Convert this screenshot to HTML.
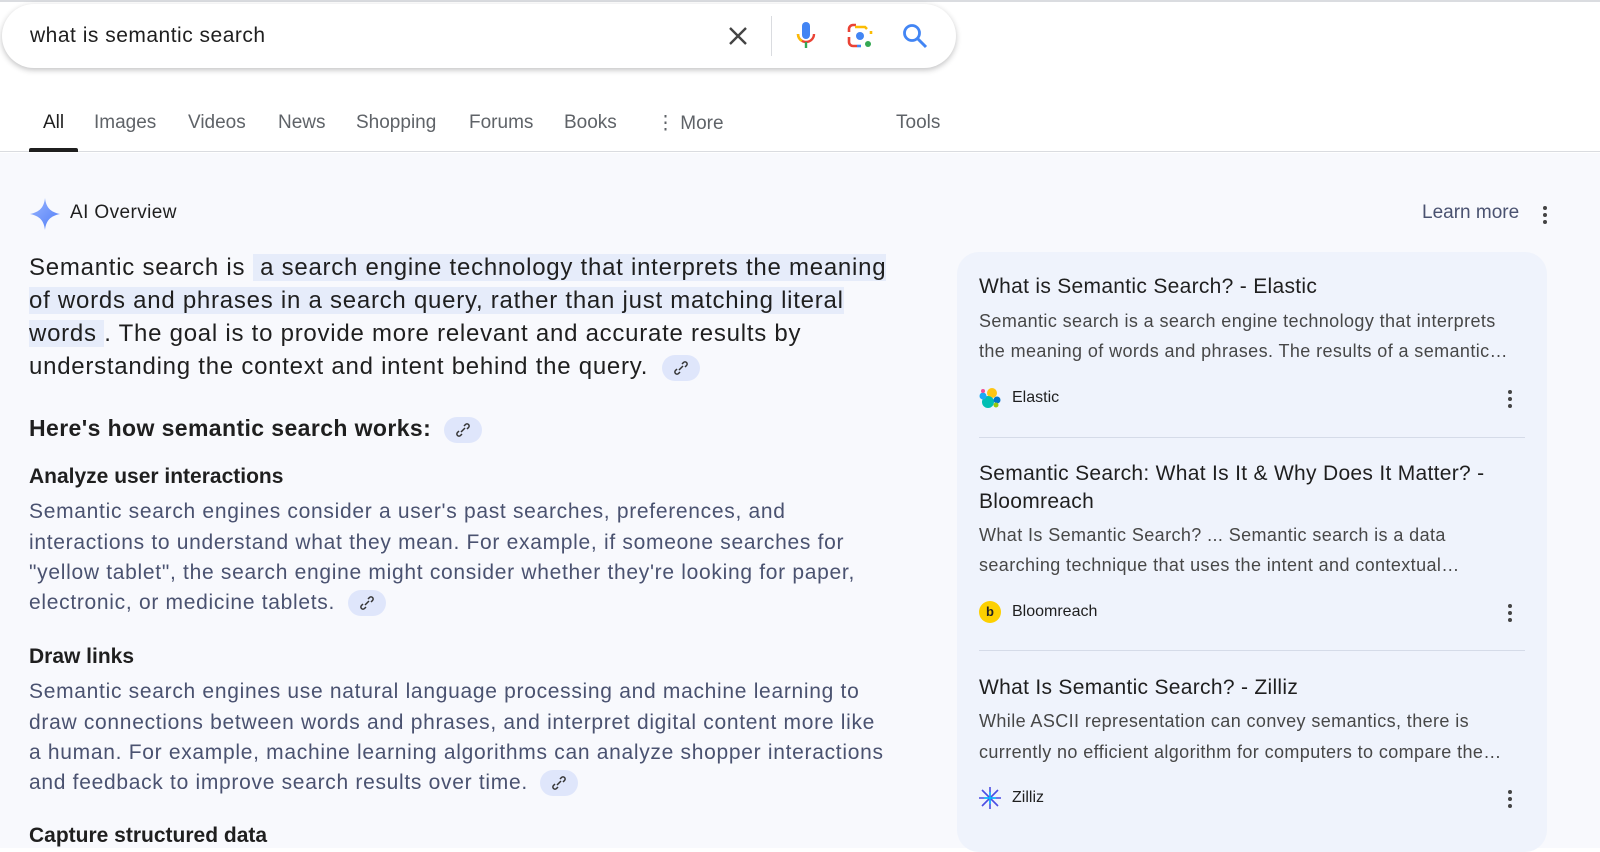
<!DOCTYPE html>
<html><head><meta charset="utf-8"><style>
*{margin:0;padding:0;box-sizing:border-box}
body{width:1600px;height:848px;overflow:hidden;background:#fff;font-family:"Liberation Sans",Arial,sans-serif;position:relative}
.a{position:absolute;white-space:nowrap}
.top{position:absolute;left:0;top:0;width:1600px;height:152px;background:#fff;border-bottom:1px solid #dadce0}
.bg{position:absolute;left:0;top:153px;width:1600px;height:695px;background:#f8f9fd}
.sb{position:absolute;left:2px;top:4px;width:954px;height:64px;border-radius:32px;background:#fff;box-shadow:0 2px 6px rgba(32,33,36,.28)}
.tab{position:absolute;top:112px;font-size:19px;color:#5f6368}
.main{font-size:24px;color:#1f1f1f;line-height:33px;letter-spacing:0.75px}
.hl{background:#e6ecfa}
.body{font-size:21px;color:#4a5270;line-height:30px;letter-spacing:0.7px}
.h{font-size:21px;color:#1f1f1f;font-weight:bold}
.chip{display:inline-block;width:38px;height:26px;border-radius:13px;background:#dfe6fb;vertical-align:middle;position:relative;margin-left:6px}
.chip svg{position:absolute;left:12px;top:6px}
.card{position:absolute;left:957px;top:252px;width:590px;height:600px;border-radius:22px;background:#eff3fc}
.ct{font-size:21px;color:#1f1f1f;letter-spacing:0.3px}
.cs{font-size:18px;color:#474747;line-height:30px;letter-spacing:0.4px}
.src{font-size:16px;color:#1f1f1f}
.dots{position:absolute;width:4px}
.dots i{display:block;width:4px;height:4px;border-radius:2px;background:#444;margin-bottom:3px}
.sep{position:absolute;left:979px;width:546px;height:1px;background:#d5dbe8}
</style></head><body>
<div class="top"></div>
<div class="bg"></div>
<div class="a" style="left:0;top:0;width:1600px;height:2px;background:#dadce0"></div>
<div class="sb"></div>
<div class="a" style="left:30px;top:24px;font-size:21px;letter-spacing:0.5px;color:#1f1f1f">what is semantic search</div>
<svg class="a" style="left:727px;top:25px" width="22" height="22" viewBox="0 0 22 22"><path d="M3 3L19 19M19 3L3 19" stroke="#444" stroke-width="2.4"/></svg>
<div class="a" style="left:771px;top:16px;width:1px;height:40px;background:#dadce0"></div>
<svg class="a" style="left:794px;top:20px" width="24" height="32" viewBox="0 0 24 32"><rect x="8" y="2" width="8" height="17" rx="4" fill="#4285f4"/><path d="M4 14a8 8 0 0 0 16 0" stroke="#ea4335" stroke-width="2.4" fill="none"/><path d="M12 22v6" stroke="#34a853" stroke-width="2.4"/><path d="M4 14a8 8 0 0 0 4 7" stroke="#fbbc04" stroke-width="2.4" fill="none"/></svg>
<svg class="a" style="left:846px;top:22px" width="28" height="28" viewBox="0 0 28 28"><path d="M3 10V7a4 4 0 0 1 4-4h3" stroke="#ea4335" stroke-width="2.6" fill="none"/><path d="M9 5h10l2 2" stroke="#fbbc04" stroke-width="2.6" fill="none"/><path d="M25 9v3" stroke="#fbbc04" stroke-width="2.6"/><path d="M3 15v5a4 4 0 0 0 4 4h4" stroke="#ea4335" stroke-width="2.6" fill="none"/><path d="M11 24h4" stroke="#4285f4" stroke-width="2.6"/><circle cx="14" cy="14" r="4" fill="#4285f4"/><circle cx="22" cy="22" r="3" fill="#34a853"/></svg>
<svg class="a" style="left:902px;top:23px" width="26" height="26" viewBox="0 0 26 26"><circle cx="10" cy="10" r="7.5" stroke="#4285f4" stroke-width="2.8" fill="none"/><path d="M15.5 15.5L24 24" stroke="#4285f4" stroke-width="3"/></svg>

<div class="tab" style="left:43px;color:#1f1f1f">All</div>
<div class="a" style="left:29px;top:148px;width:49px;height:4px;background:#1f1f1f;border-radius:2px 2px 0 0"></div>
<div class="tab" style="left:94px">Images</div>
<div class="tab" style="left:188px">Videos</div>
<div class="tab" style="left:278px">News</div>
<div class="tab" style="left:356px">Shopping</div>
<div class="tab" style="left:469px">Forums</div>
<div class="tab" style="left:564px">Books</div>
<div class="tab" style="left:656px">⋮ More</div>
<div class="tab" style="left:896px">Tools</div>

<svg class="a" style="left:30px;top:198px" width="30" height="32" viewBox="0 0 30 32"><defs><linearGradient id="g" x1="0" y1="0" x2="1" y2="1"><stop offset="0" stop-color="#9ab6ff"/><stop offset="1" stop-color="#4f7cf7"/></linearGradient></defs><path d="M15 0C16 9 20 14 30 16C20 18 16 23 15 32C14 23 10 18 0 16C10 14 14 9 15 0Z" fill="url(#g)"/></svg>
<div class="a" style="left:70px;top:202px;font-size:19px;letter-spacing:0.4px;color:#1f1f1f">AI Overview</div>
<div class="a" style="left:1422px;top:202px;font-size:19px;color:#4a5270">Learn more</div>
<div class="dots" style="left:1543px;top:206px"><i></i><i></i><i></i></div>

<div class="a main" style="left:29px;top:251px">Semantic search is <span class="hl">&nbsp;a search engine technology that interprets the meaning</span></div>
<div class="a main" style="left:29px;top:284px"><span class="hl">of words and phrases in a search query, rather than just matching literal</span></div>
<div class="a main" style="left:29px;top:317px"><span class="hl">words&nbsp;</span>. The goal is to provide more relevant and accurate results by</div>
<div class="a main" style="left:29px;top:350px">understanding the context and intent behind the query. <span class="chip"><svg width="14" height="14" viewBox="0 0 14 14"><path d="M8 3l1.5-1.5a2 2 0 0 1 3 3L11 6M6 11l-1.5 1.5a2 2 0 0 1-3-3L3 8M5 9l4-4" stroke="#333" stroke-width="1.5" fill="none"/></svg></span></div>

<div class="a" style="left:29px;top:415px;font-size:23px;letter-spacing:0.4px;color:#1f1f1f;font-weight:bold">Here's how semantic search works: <span class="chip"><svg width="14" height="14" viewBox="0 0 14 14"><path d="M8 3l1.5-1.5a2 2 0 0 1 3 3L11 6M6 11l-1.5 1.5a2 2 0 0 1-3-3L3 8M5 9l4-4" stroke="#333" stroke-width="1.5" fill="none"/></svg></span></div>

<div class="a h" style="left:29px;top:465px">Analyze user interactions</div>
<div class="a body" style="left:29px;top:497px">Semantic search engines consider a user's past searches, preferences, and</div>
<div class="a body" style="left:29px;top:528px">interactions to understand what they mean. For example, if someone searches for</div>
<div class="a body" style="left:29px;top:558px">"yellow tablet", the search engine might consider whether they're looking for paper,</div>
<div class="a body" style="left:29px;top:588px">electronic, or medicine tablets. <span class="chip"><svg width="14" height="14" viewBox="0 0 14 14"><path d="M8 3l1.5-1.5a2 2 0 0 1 3 3L11 6M6 11l-1.5 1.5a2 2 0 0 1-3-3L3 8M5 9l4-4" stroke="#333" stroke-width="1.5" fill="none"/></svg></span></div>

<div class="a h" style="left:29px;top:645px">Draw links</div>
<div class="a body" style="left:29px;top:677px">Semantic search engines use natural language processing and machine learning to</div>
<div class="a body" style="left:29px;top:708px">draw connections between words and phrases, and interpret digital content more like</div>
<div class="a body" style="left:29px;top:738px">a human. For example, machine learning algorithms can analyze shopper interactions</div>
<div class="a body" style="left:29px;top:768px">and feedback to improve search results over time. <span class="chip"><svg width="14" height="14" viewBox="0 0 14 14"><path d="M8 3l1.5-1.5a2 2 0 0 1 3 3L11 6M6 11l-1.5 1.5a2 2 0 0 1-3-3L3 8M5 9l4-4" stroke="#333" stroke-width="1.5" fill="none"/></svg></span></div>
<div class="a h" style="left:29px;top:824px">Capture structured data</div>

<div class="card"></div>
<div class="a ct" style="left:979px;top:275px">What is Semantic Search? - Elastic</div>
<div class="a cs" style="left:979px;top:306px">Semantic search is a search engine technology that interprets</div>
<div class="a cs" style="left:979px;top:336px">the meaning of words and phrases. The results of a semantic…</div>
<svg class="a" style="left:979px;top:387px" width="22" height="22" viewBox="0 0 22 22"><circle cx="13" cy="6" r="5" fill="#fec514"/><circle cx="9" cy="15" r="6" fill="#00bfb3"/><circle cx="4" cy="9" r="3.5" fill="#1ba9f5"/><circle cx="18" cy="13" r="3.5" fill="#0077cc"/><circle cx="4" cy="4" r="2" fill="#f04e98"/><circle cx="17" cy="18" r="2.5" fill="#93c90e"/></svg>
<div class="a src" style="left:1012px;top:389px">Elastic</div>
<div class="dots" style="left:1508px;top:390px"><i></i><i></i><i></i></div>
<div class="sep" style="top:437px"></div>

<div class="a ct" style="left:979px;top:462px">Semantic Search: What Is It &amp; Why Does It Matter? -</div>
<div class="a ct" style="left:979px;top:490px">Bloomreach</div>
<div class="a cs" style="left:979px;top:520px">What Is Semantic Search? ... Semantic search is a data</div>
<div class="a cs" style="left:979px;top:550px">searching technique that uses the intent and contextual…</div>
<div class="a" style="left:979px;top:601px;width:22px;height:22px;border-radius:11px;background:#fdd000;font-size:13px;font-weight:bold;text-align:center;line-height:22px;color:#222">b</div>
<div class="a src" style="left:1012px;top:603px">Bloomreach</div>
<div class="dots" style="left:1508px;top:604px"><i></i><i></i><i></i></div>
<div class="sep" style="top:650px"></div>

<div class="a ct" style="left:979px;top:676px">What Is Semantic Search? - Zilliz</div>
<div class="a cs" style="left:979px;top:706px">While ASCII representation can convey semantics, there is</div>
<div class="a cs" style="left:979px;top:737px">currently no efficient algorithm for computers to compare the…</div>
<svg class="a" style="left:979px;top:787px" width="22" height="22" viewBox="0 0 22 22"><path d="M11 0V22M0 11H22M3 3L19 19M19 3L3 19" stroke="#4b4de3" stroke-width="1.6"/><path d="M11 5V17M5 11H17" stroke="#00c4ff" stroke-width="1.4"/></svg>
<div class="a src" style="left:1012px;top:789px">Zilliz</div>
<div class="dots" style="left:1508px;top:790px"><i></i><i></i><i></i></div>
</body></html>
